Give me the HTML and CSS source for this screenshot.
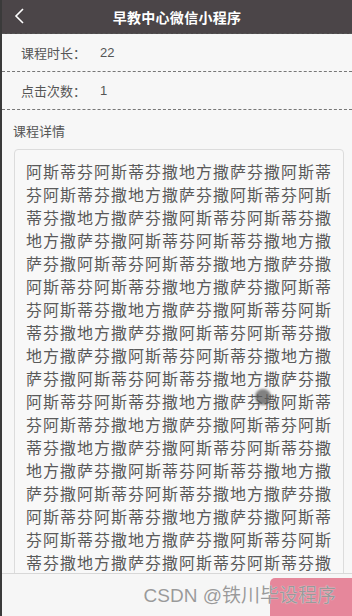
FILE: index.html
```html
<!DOCTYPE html>
<html lang="zh">
<head>
<meta charset="utf-8">
<link rel="stylesheet" href="styles.css">
</head>
<body>
<div class="page">
  <header class="topbar">
    <svg class="back" width="12" height="18" viewBox="0 0 12 18"><polyline points="9,2 2,9 9,16" fill="none" stroke="#fff" stroke-width="1.6"/></svg>
    <div class="title">早教中心微信小程序</div>
  </header>
  <div class="row"><span class="label">课程时长：</span><span class="value">22</span></div>
  <div class="row"><span class="label">点击次数：</span><span class="value">1</span></div>
  <div class="section-title">课程详情</div>
  <div class="detail" id="detail">阿斯蒂芬阿斯蒂芬撒地方撒萨芬撒阿斯蒂芬阿斯蒂芬撒地方撒萨芬撒阿斯蒂芬阿斯蒂芬撒地方撒萨芬撒阿斯蒂芬阿斯蒂芬撒地方撒萨芬撒阿斯蒂芬阿斯蒂芬撒地方撒萨芬撒阿斯蒂芬阿斯蒂芬撒地方撒萨芬撒阿斯蒂芬阿斯蒂芬撒地方撒萨芬撒阿斯蒂芬阿斯蒂芬撒地方撒萨芬撒阿斯蒂芬阿斯蒂芬撒地方撒萨芬撒阿斯蒂芬阿斯蒂芬撒地方撒萨芬撒阿斯蒂芬阿斯蒂芬撒地方撒萨芬撒阿斯蒂芬阿斯蒂芬撒地方撒萨芬撒阿斯蒂芬阿斯蒂芬撒地方撒萨芬撒阿斯蒂芬阿斯蒂芬撒地方撒萨芬撒阿斯蒂芬阿斯蒂芬撒地方撒萨芬撒阿斯蒂芬阿斯蒂芬撒地方撒萨芬撒阿斯蒂芬阿斯蒂芬撒地方撒萨芬撒阿斯蒂芬阿斯蒂芬撒地方撒萨芬撒阿斯蒂芬阿斯蒂芬撒地方撒萨芬撒阿斯蒂芬阿斯蒂芬撒地方撒萨芬撒阿斯蒂芬阿斯蒂芬撒地方撒萨芬撒阿斯蒂芬阿斯蒂芬撒地方撒萨芬撒阿斯蒂芬阿斯蒂芬撒地方撒萨芬撒阿斯蒂芬阿斯蒂芬撒地方撒萨芬撒阿斯蒂芬阿斯蒂芬撒地方撒萨芬撒</div>
  <div class="cursor"></div>
  <div class="bottombar">
    <div class="mark-bg"></div>
    <div class="watermark">CSDN @铁川毕设程序</div>
  </div>
</div>
</body>
</html>
```
FILE: styles.css
```css
html, body {
  margin: 0;
  padding: 0;
}
body {
  width: 352px;
  height: 616px;
  overflow: hidden;
  background: #f7f7f7;
  font-family: "Noto Sans CJK SC", "Noto Sans", sans-serif;
  color: #555;
}
.page {
  position: relative;
  height: 616px;
  border-left: 2px solid #3a3a3a;
  box-sizing: border-box;
  overflow: hidden;
}
.topbar {
  height: 33px;
  background: #4b4548;
  display: flex;
  align-items: center;
  justify-content: center;
  position: relative;
  border-bottom: 1px dashed #555;
}
.back {
  position: absolute;
  left: 12px;
  top: 7px;
}
.title {
  color: #fff;
  font-size: 14px;
  font-weight: bold;
  letter-spacing: 0.3px;
}
.row {
  height: 37px;
  display: flex;
  align-items: center;
  padding-left: 19px;
  font-size: 13px;
  border-bottom: 1px dashed #777;
  color: #555;
}
.label {
  width: 79px;
}
.value {
  font-family: "Liberation Sans", Arial, sans-serif;
  font-size: 13px;
}
.section-title {
  font-size: 13px;
  padding: 11px 0 0 11px;
  height: 28px;
  line-height: 20px;
}
.detail {
  margin: 0 8px 0 12px;
  border: 1px solid #dcdcdc;
  border-radius: 4px;
  padding: 10px 8px 10px 11px;
  font-size: 16px;
  letter-spacing: 1px;
  line-height: 23px;
  color: #5a5a5a;
  word-break: break-all;
  background: #f8f8f8;
}
.cursor {
  position: absolute;
  left: 253px;
  top: 389px;
  width: 16px;
  height: 16px;
  border-radius: 50%;
  background: rgba(90, 90, 90, 0.75);
  filter: blur(1px);
}
.bottombar {
  position: absolute;
  left: 0;
  right: 0;
  bottom: 0;
  height: 42px;
  background: #f6f6f6;
  border-top: 1px solid #d8d8d8;
}
.mark-bg {
  position: absolute;
  right: 0;
  bottom: 0;
  width: 82px;
  height: 38px;
  background: #e6879b;
  border-top-left-radius: 5px;
}
.watermark {
  position: absolute;
  right: 16px;
  top: 9px;
  font-size: 19px;
  line-height: 26px;
  color: #9a9a9a;
  font-family: "Liberation Sans", "Noto Sans CJK SC", sans-serif;
  text-shadow: 0 0 1px #fff;
  white-space: nowrap;
}
```
